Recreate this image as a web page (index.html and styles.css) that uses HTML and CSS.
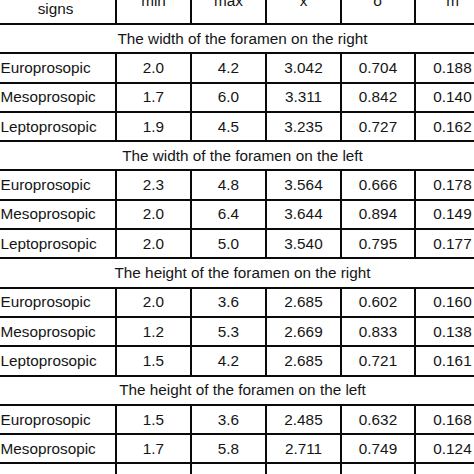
FILE: index.html
```html
<!DOCTYPE html>
<html>
<head>
<meta charset="utf-8">
<link rel="stylesheet" href="styles.css">
</head>
<body>
<div class="table">
  <div class="cell head">Craniometric<br>signs</div>
  <div class="cell head">min</div>
  <div class="cell head">max</div>
  <div class="cell head">x̄</div>
  <div class="cell head">σ</div>
  <div class="cell head">m</div>

  <div class="cell section">The width of the foramen on the right</div>
  <div class="cell label">Europrosopic</div><div class="cell">2.0</div><div class="cell">4.2</div><div class="cell">3.042</div><div class="cell">0.704</div><div class="cell">0.188</div>
  <div class="cell label">Mesoprosopic</div><div class="cell">1.7</div><div class="cell">6.0</div><div class="cell">3.311</div><div class="cell">0.842</div><div class="cell">0.140</div>
  <div class="cell label">Leptoprosopic</div><div class="cell">1.9</div><div class="cell">4.5</div><div class="cell">3.235</div><div class="cell">0.727</div><div class="cell">0.162</div>

  <div class="cell section">The width of the foramen on the left</div>
  <div class="cell label">Europrosopic</div><div class="cell">2.3</div><div class="cell">4.8</div><div class="cell">3.564</div><div class="cell">0.666</div><div class="cell">0.178</div>
  <div class="cell label">Mesoprosopic</div><div class="cell">2.0</div><div class="cell">6.4</div><div class="cell">3.644</div><div class="cell">0.894</div><div class="cell">0.149</div>
  <div class="cell label">Leptoprosopic</div><div class="cell">2.0</div><div class="cell">5.0</div><div class="cell">3.540</div><div class="cell">0.795</div><div class="cell">0.177</div>

  <div class="cell section">The height of the foramen on the right</div>
  <div class="cell label">Europrosopic</div><div class="cell">2.0</div><div class="cell">3.6</div><div class="cell">2.685</div><div class="cell">0.602</div><div class="cell">0.160</div>
  <div class="cell label">Mesoprosopic</div><div class="cell">1.2</div><div class="cell">5.3</div><div class="cell">2.669</div><div class="cell">0.833</div><div class="cell">0.138</div>
  <div class="cell label">Leptoprosopic</div><div class="cell">1.5</div><div class="cell">4.2</div><div class="cell">2.685</div><div class="cell">0.721</div><div class="cell">0.161</div>

  <div class="cell section">The height of the foramen on the left</div>
  <div class="cell label">Europrosopic</div><div class="cell">1.5</div><div class="cell">3.6</div><div class="cell">2.485</div><div class="cell">0.632</div><div class="cell">0.168</div>
  <div class="cell label">Mesoprosopic</div><div class="cell">1.7</div><div class="cell">5.8</div><div class="cell">2.711</div><div class="cell">0.749</div><div class="cell">0.124</div>
  <div class="cell label"></div><div class="cell"></div><div class="cell"></div><div class="cell"></div><div class="cell"></div><div class="cell"></div>
</div>
</body>
</html>
```

FILE: styles.css
```css
html, body {
  margin: 0;
  padding: 0;
  background: #fff;
  overflow: hidden;
  width: 474px;
  height: 474px;
}

.table {
  display: grid;
  grid-template-columns: 119px 73px 73px 73px 72px 73px;
  grid-template-rows: 44px;
  grid-auto-rows: 27.3px;
  gap: 2px;
  padding: 2px;
  background: #0a0a0a;
  width: max-content;
  margin-left: -6px;
  margin-top: -23px;
  font-family: "Liberation Sans", Arial, sans-serif;
  font-size: 15.3px;
  line-height: 16px;
  color: #151515;
}

.cell {
  background: #fff;
  display: flex;
  align-items: center;
  justify-content: center;
  text-align: center;
  white-space: nowrap;
}

.label {
  justify-content: flex-start;
  padding-left: 4.5px;
}

.section {
  grid-column: 1 / -1;
}
```
